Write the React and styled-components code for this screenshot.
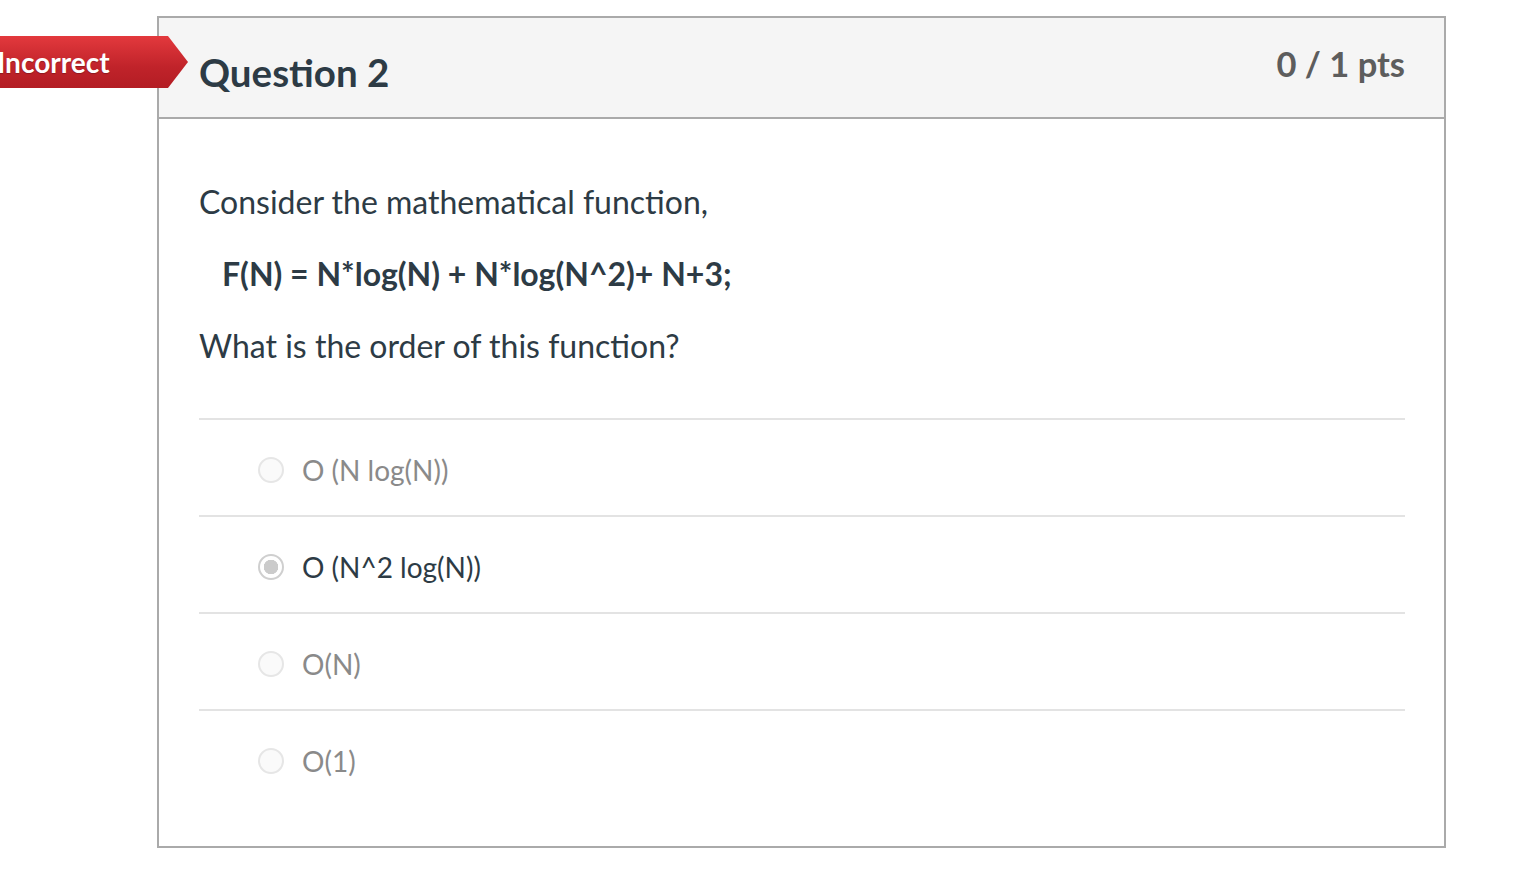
import React from "react";
import styled, { createGlobalStyle } from "styled-components";

const Global = createGlobalStyle`
  html, body { margin: 0; padding: 0; background: #fff; }
  body { font-family: Lato, "Open Sans", sans-serif; color: #2d3b45; }
`;

const Page = styled.div`
  padding: 16px 0 0 157px;
  width: 1289px;
`;

const Card = styled.section`
  position: relative;
  border: 2px solid #aaaaaa;
  background: #fff;
`;

const Badge = styled.div`
  position: absolute;
  left: -171px;
  top: 18px;
  width: 200px;
  height: 52px;
  box-sizing: border-box;
  padding-left: 9px;
  display: flex;
  align-items: center;
  color: #fff;
  font-size: 28px;
  font-weight: 700;
  background: linear-gradient(#e3393d, #c0232a 60%, #b31d24);
  clip-path: polygon(0 0, 180px 0, 200px 50%, 180px 100%, 0 100%);
  text-shadow: 0 1px 1px rgba(0, 0, 0, 0.25);
`;

const Header = styled.header`
  display: flex;
  justify-content: space-between;
  align-items: flex-start;
  height: 99px;
  padding: 0 39px 0 40px;
  background: #f5f5f5;
  border-bottom: 2px solid #aaaaaa;
`;

const Title = styled.h2`
  margin: 27px 0 0;
  font-size: 38.5px;
  line-height: 54px;
  font-weight: 700;
  color: #2d3b45;
`;

const Points = styled.div`
  margin-top: 22px;
  font-size: 34.5px;
  line-height: 48px;
  font-weight: 700;
  color: #5d5d5d;
`;

const Body = styled.div`
  padding: 62px 39px 40px 40px;
`;

const Para = styled.p`
  margin: 0 0 30px;
  font-size: 32px;
  line-height: 42px;
  font-weight: ${(p) => (p.$bold ? 700 : 400)};
  padding-left: ${(p) => (p.$indent ? "23px" : "0")};
  &:last-of-type { margin-bottom: 0; }
`;

const Answers = styled.ul`
  list-style: none;
  margin: 51px 0 0;
  padding: 0;
`;

const Answer = styled.li`
  display: flex;
  align-items: center;
  box-sizing: border-box;
  height: 97px;
  padding: 4px 0 0 59px;
  border-top: 2px solid #e3e3e3;
  font-size: 28px;
  color: ${(p) => (p.$selected ? "#2d3b45" : "#8a8a8a")};
`;

const Radio = styled.span`
  width: 26px;
  height: 26px;
  box-sizing: border-box;
  border-radius: 50%;
  margin-right: 18px;
  flex: none;
  border: 2px solid ${(p) => (p.$selected ? "#cfcfcf" : "#e6e6e6")};
  background: ${(p) =>
    p.$selected
      ? "radial-gradient(circle, #cbcbcb 0 7px, #fff 7.5px)"
      : "#fafafa"};
`;

const answers = [
  { text: "O (N log(N))" },
  { text: "O (N^2 log(N))", selected: true },
  { text: "O(N)" },
  { text: "O(1)" },
];

export default function App() {
  return (
    <>
      <Global />
      <Page>
        <Card>
          <Badge>Incorrect</Badge>
          <Header>
            <Title>Question 2</Title>
            <Points>0 / 1 pts</Points>
          </Header>
          <Body>
            <Para>Consider the mathematical function,</Para>
            <Para $bold $indent>
              F(N) = N*log(N) + N*log(N^2)+ N+3;
            </Para>
            <Para>What is the order of this function?</Para>
            <Answers>
              {answers.map((a) => (
                <Answer key={a.text} $selected={a.selected}>
                  <Radio $selected={a.selected} />
                  {a.text}
                </Answer>
              ))}
            </Answers>
          </Body>
        </Card>
      </Page>
    </>
  );
}
